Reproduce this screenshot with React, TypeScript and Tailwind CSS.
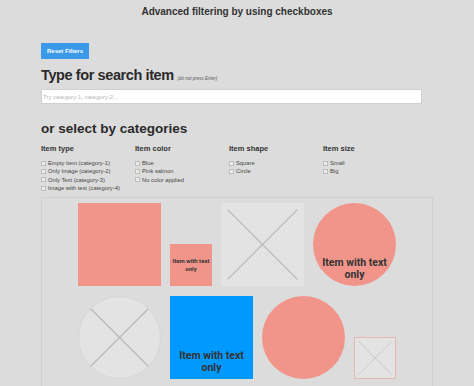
import React from 'react';

type Shape = {
  kind: 'salmon' | 'blue' | 'placeholder';
  size: 'big' | 'small';
  round?: boolean;
  text?: boolean;
  bordered?: boolean;
};

const FILTERS: { title: string; items: string[] }[] = [
  {
    title: 'Item type',
    items: ['Empty item (category-1)', 'Only Image (category-2)', 'Only Text (category-3)', 'Image with text (category-4)'],
  },
  { title: 'Item color', items: ['Blue', 'Pink salmon', 'No color applied'] },
  { title: 'Item shape', items: ['Square', 'Circle'] },
  { title: 'Item size', items: ['Small', 'Big'] },
];

const SHAPES: Shape[] = [
  { kind: 'salmon', size: 'big' },
  { kind: 'salmon', size: 'small', text: true },
  { kind: 'placeholder', size: 'big' },
  { kind: 'salmon', size: 'big', round: true, text: true },
  { kind: 'placeholder', size: 'big', round: true },
  { kind: 'blue', size: 'big', text: true },
  { kind: 'salmon', size: 'big', round: true },
  { kind: 'placeholder', size: 'small', bordered: true },
];

const Cross: React.FC = () => (
  <svg className="absolute inset-0 h-full w-full" viewBox="0 0 100 100" preserveAspectRatio="none">
    <line x1="8" y1="8" x2="92" y2="92" stroke="#b9b9b9" strokeWidth="1.6" />
    <line x1="92" y1="8" x2="8" y2="92" stroke="#b9b9b9" strokeWidth="1.6" />
  </svg>
);

const Item: React.FC<{ s: Shape }> = ({ s }) => {
  const big = s.size === 'big';
  return (
    <div
      className={[
        'relative flex shrink-0 flex-col items-center justify-end overflow-hidden text-center font-bold text-[#333]',
        "font-['Roboto','Liberation_Sans',sans-serif]",
        big ? 'h-[83px] w-[83px]' : 'h-[42px] w-[42px]',
        s.round ? 'rounded-full' : '',
        s.kind === 'salmon' ? 'bg-[#f1958a]' : s.kind === 'blue' ? 'bg-[#0099ff]' : 'bg-[#e3e3e3]',
        s.bordered ? 'border border-[#e3b8b3]' : '',
        s.kind === 'placeholder' && s.round ? 'border border-[#d6d6d6]' : '',
      ].join(' ')}
    >
      {s.kind === 'placeholder' && <Cross />}
      {s.text &&
        (big ? (
          <p className="mb-[4px] px-[4px] text-[10.5px] leading-[12.5px]">Item with text only</p>
        ) : (
          <p className="mb-[13px] text-[6px] leading-[8px]">Item with text only</p>
        ))}
    </div>
  );
};

export default function App() {
  return (
    <div className="min-h-screen bg-[#dcdcdc] font-['Liberation_Sans',Arial,sans-serif] text-[#333]">
      <h1 className="pt-[5px] text-center text-[10px] font-bold leading-[14px]">
        Advanced filtering by using checkboxes
      </h1>

      <div className="px-[41px] pt-[24px]">
        <button className="block h-[16px] bg-[#3b99e9] px-[6px] text-[6px] font-bold text-white">Reset Filters</button>

        <h2 className="mt-[6px] text-[14.5px] font-bold leading-[20px] tracking-[-0.4px] text-[#2a2a2a]">
          Type for search item{' '}
          <span className="text-[4.5px] font-normal italic tracking-normal text-[#555]">(do not press Enter)</span>
        </h2>

        <input
          className="block h-[15px] w-[381px] border border-[#d0d0d0] bg-white px-[1px] text-[6px] placeholder:text-[#b8b8b8] outline-none"
          placeholder="Try category-1, category-2..."
        />

        <h2 className="mt-[16px] text-[13.5px] font-bold leading-[18px] text-[#2a2a2a]">or select by categories</h2>

        <div className="mt-[5px] flex">
          {FILTERS.map((f) => (
            <div key={f.title} className="w-[94px]">
              <h3 className="text-[7.5px] font-bold leading-[12px] text-[#333]">{f.title}</h3>
              <ul className="mt-[4px]">
                {f.items.map((it) => (
                  <li key={it} className="flex h-[8.4px] items-center gap-[2px] text-[5.8px] text-[#444]">
                    <span className="h-[5px] w-[5px] shrink-0 border border-[#bdbdbd] bg-[#ececec]" />
                    {it}
                  </li>
                ))}
              </ul>
            </div>
          ))}
        </div>

        <div className="mt-[4px] flex flex-wrap items-end justify-center gap-x-[9px] gap-y-[10px] border border-[#cfcfcf] pt-[5px] pb-[10px]">
          {SHAPES.map((s, i) => (
            <Item key={i} s={s} />
          ))}
        </div>
      </div>
    </div>
  );
}
